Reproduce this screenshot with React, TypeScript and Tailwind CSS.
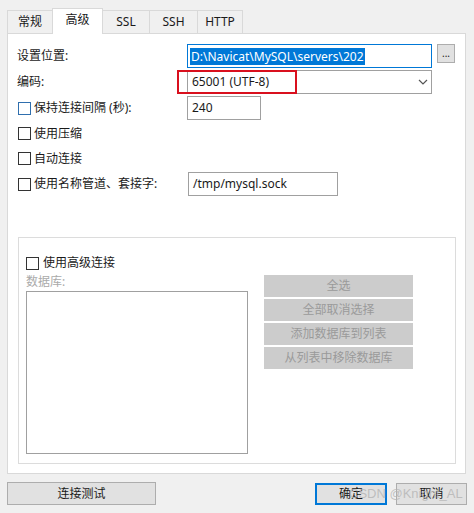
import React from "react";

const font = { fontFamily: '"Noto Sans", "Noto Sans CJK SC", sans-serif' };

function Check({ blue = false }: { blue?: boolean }) {
  return (
    <span
      className={`inline-block w-[13px] h-[13px] shrink-0 bg-white border ${
        blue ? "border-[#2f6fae]" : "border-[#333333]"
      }`}
    />
  );
}

export default function App() {
  return (
    <div
      className="relative w-[474px] h-[513px] bg-[#f0f0f0] text-[12px] text-[#1a1a1a] overflow-hidden"
      style={font}
    >
      {/* tabs */}
      <div className="flex items-end pl-[7px] pt-[7px] h-[33px]">
        <div className="flex items-center justify-center h-[23px] w-[45px] bg-[#f0f0f0] border-l border-t border-[#d9d9d9]">常规</div>
        <div className="flex items-center justify-center h-[26px] w-[51px] bg-white border-l border-r border-t border-[#d9d9d9] relative z-10 -mb-px pb-[3px]">高级</div>
        <div className="flex items-center justify-center h-[23px] w-[47px] bg-[#f0f0f0] border-t border-r border-[#d9d9d9]">SSL</div>
        <div className="flex items-center justify-center h-[23px] w-[48px] bg-[#f0f0f0] border-t border-r border-[#d9d9d9]">SSH</div>
        <div className="flex items-center justify-center h-[23px] w-[45px] bg-[#f0f0f0] border-t border-r border-[#d9d9d9]">HTTP</div>
      </div>

      {/* panel */}
      <div className="ml-[7px] w-[459px] h-[441px] bg-white border border-[#d9d9d9] relative">
        <div className="pl-[9px] pt-[10px]">
          {/* row 1 */}
          <div className="flex items-center h-[24px]">
            <div className="w-[170px]">设置位置:</div>
            <div className="w-[245px] h-[24px] border border-[#0078d7] flex items-center px-[2px]">
              <span className="bg-[#0078d7] text-white leading-[17px] px-px">D:\Navicat\MySQL\servers\202</span>
            </div>
            <div className="ml-[5px] w-[18px] h-[19px] bg-[#e1e1e1] border border-[#adadad] flex items-center justify-center text-[10px] leading-none pb-[2px] self-start">
              ...
            </div>
          </div>
          {/* row 2 */}
          <div className="flex items-center h-[24px] mt-[2px]">
            <div className="w-[170px]">编码:</div>
            <div className="w-[245px] h-[24px] border border-[#a0a0a0] flex items-center justify-between pl-[4px] pr-[3px]">
              <span>65001 (UTF-8)</span>
              <svg width="10" height="6" viewBox="0 0 10 6" className="text-[#555]">
                <path d="M1 1 L5 5 L9 1" stroke="currentColor" strokeWidth="1.2" fill="none" />
              </svg>
            </div>
          </div>
          {/* row 3 */}
          <div className="flex items-center h-[24px] mt-[2px]">
            <div className="w-[170px] flex items-center gap-[3px] pl-px">
              <Check blue />
              <span>保持连接间隔 (秒):</span>
            </div>
            <div className="w-[74px] h-[24px] border border-[#a0a0a0] flex items-center pl-[4px]">240</div>
          </div>
          {/* row 4 */}
          <div className="flex items-center h-[25px] mt-px gap-[3px] pl-px">
            <Check />
            <span>使用压缩</span>
          </div>
          {/* row 5 */}
          <div className="flex items-center h-[25px] gap-[3px] pl-px">
            <Check />
            <span>自动连接</span>
          </div>
          {/* row 6 */}
          <div className="flex items-center h-[24px] mt-px">
            <div className="w-[171px] flex items-center gap-[3px] pl-px">
              <Check />
              <span>使用名称管道、套接字:</span>
            </div>
            <div className="w-[150px] h-[24px] border border-[#a0a0a0] flex items-center pl-[4px]">/tmp/mysql.sock</div>
          </div>

          {/* group box */}
          <div className="mt-[41px] ml-[1px] w-[438px] h-[227px] border border-[#dcdcdc] pl-[7px] pt-[18px]">
            <div className="flex items-center gap-[4px] h-[14px]">
              <Check />
              <span>使用高级连接</span>
            </div>
            <div className="flex mt-[6px]">
              <div>
                <div className="text-[#aaaaaa] h-[14px] leading-[14px] -mt-[1px]">数据库:</div>
                <div className="mt-[2px] w-[222px] h-[163px] border border-[#a0a0a0] bg-white" />
              </div>
              <div className="ml-[16px] flex flex-col gap-[2px] -mt-[1px]">
                {["全选", "全部取消选择", "添加数据库到列表", "从列表中移除数据库"].map((t) => (
                  <div
                    key={t}
                    className="w-[149px] h-[22px] bg-[#cccccc] text-[#9a9a9a] flex items-center justify-center"
                  >
                    {t}
                  </div>
                ))}
              </div>
            </div>
          </div>
        </div>
      </div>

      {/* bottom buttons */}
      <div className="flex items-center mt-[8px] pl-[7px] h-[23px]">
        <div className="w-[149px] h-[23px] bg-[#e1e1e1] border border-[#adadad] flex items-center justify-center">连接测试</div>
        <div className="ml-[159px] w-[72px] h-[22px] bg-[#e1e1e1] border-2 border-[#0078d7] flex items-center justify-center">确定</div>
        <div className="ml-[9px] w-[71px] h-[22px] bg-[#e1e1e1] border border-[#adadad] flex items-center justify-center">取消</div>
      </div>

      {/* red annotation box */}
      <div className="absolute left-[177px] top-[70px] w-[120px] h-[24px] border-2 border-[#d9101e] pointer-events-none" />

      {/* watermark */}
      <div
        className="absolute left-[349px] top-[484px] text-[13px] text-[#b4b4b4]/80 pointer-events-none whitespace-nowrap"
        style={{ fontFamily: '"Liberation Sans", "Noto Sans", sans-serif' }}
      >
        CSDN @Knight_AL
      </div>
    </div>
  );
}
